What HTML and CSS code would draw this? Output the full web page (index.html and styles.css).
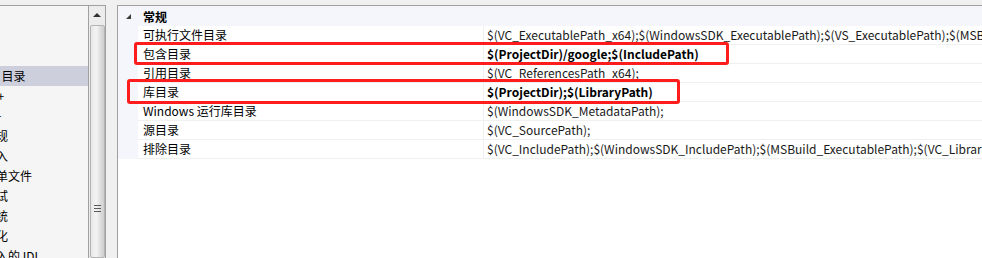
FILE: index.html
```html
<!DOCTYPE html>
<html lang="zh-CN">
<head>
  <meta charset="UTF-8">
  <title>VC++ 目录</title>
  <link rel="stylesheet" href="styles.css">
</head>
<body>
  <div class="window">
    <!-- 左侧属性树 -->
    <div class="tree-panel">
      <ul class="tree">
        <li class="node selected"><span class="label">VC++ 目录</span></li>
        <li class="node"><span class="label">C/C++</span></li>
        <li class="node"><span class="label tail">链接器 +</span></li>
        <li class="node child"><span class="label">常规</span></li>
        <li class="node child"><span class="label">输入</span></li>
        <li class="node child"><span class="label">清单文件</span></li>
        <li class="node child"><span class="label">调试</span></li>
        <li class="node child"><span class="label">系统</span></li>
        <li class="node child"><span class="label">优化</span></li>
        <li class="node child"><span class="label">嵌入的 IDL</span></li>
      </ul>
      <div class="scrollbar">
        <div class="arrow-up"></div>
        <div class="thumb">
          <div class="grip"></div>
        </div>
      </div>
    </div>

    <!-- 右侧属性表格 -->
    <div class="grid-panel">
      <div class="group-row">
        <span class="expander"></span>
        <span class="group-title">常规</span>
      </div>
      <div class="prop-row">
        <div class="name">可执行文件目录</div>
        <div class="value">$(VC_ExecutablePath_x64);$(WindowsSDK_ExecutablePath);$(VS_ExecutablePath);$(MSB</div>
      </div>
      <div class="prop-row">
        <div class="name">包含目录</div>
        <div class="value modified">$(ProjectDir)/google;$(IncludePath)</div>
      </div>
      <div class="prop-row">
        <div class="name">引用目录</div>
        <div class="value">$(VC_ReferencesPath_x64);</div>
      </div>
      <div class="prop-row">
        <div class="name">库目录</div>
        <div class="value modified">$(ProjectDir);$(LibraryPath)</div>
      </div>
      <div class="prop-row">
        <div class="name">Windows 运行库目录</div>
        <div class="value">$(WindowsSDK_MetadataPath);</div>
      </div>
      <div class="prop-row">
        <div class="name">源目录</div>
        <div class="value">$(VC_SourcePath);</div>
      </div>
      <div class="prop-row">
        <div class="name">排除目录</div>
        <div class="value">$(VC_IncludePath);$(WindowsSDK_IncludePath);$(MSBuild_ExecutablePath);$(VC_Librar</div>
      </div>

      <!-- 标注框 -->
      <div class="mark mark-include"></div>
      <div class="mark mark-lib"></div>
    </div>
  </div>
</body>
</html>
```

FILE: styles.css
```css
* {
  margin: 0;
  padding: 0;
  box-sizing: border-box;
}

body {
  width: 982px;
  height: 258px;
  overflow: hidden;
  background-color: #f0f0f0;
  font-family: "Noto Sans CJK SC", "Noto Sans", sans-serif;
  font-size: 12px;
  color: #000000;
}

.window {
  display: flex;
  padding-top: 5px;
  height: 258px;
  gap: 11px;
}

/* 左侧树 */
.tree-panel {
  display: flex;
  flex-shrink: 0;
  width: 106px;
  height: 253px;
  background-color: #f5f5f5;
  border-top: 1px solid #a0a0a0;
  border-right: 1px solid #a0a0a0;
  overflow: hidden;
}

.tree {
  list-style: none;
  width: 88px;
  padding-top: 60px;
  overflow: hidden;
}

.node {
  height: 20px;
  line-height: 20px;
  white-space: nowrap;
}

.node .label {
  display: inline-block;
  margin-left: -29px;
}

.node .tail {
  margin-left: -44px;
}

.node.child .label {
  margin-left: -16px;
}

.node.selected {
  background-color: #cdcfdd;
}

.scrollbar {
  width: 17px;
  border-left: 1px solid #a0a0a0;
  background-color: #ececec;
  display: flex;
  flex-direction: column;
  align-items: center;
}

.arrow-up {
  margin-top: 7px;
  width: 0;
  height: 0;
  border-left: 4px solid transparent;
  border-right: 4px solid transparent;
  border-bottom: 4px solid #303030;
}

.thumb {
  margin-top: 8px;
  width: 15px;
  flex: 1;
  border: 1px solid #b4b4b4;
  border-radius: 2px;
  background: linear-gradient(to right, #e6e6e6, #f4f4f4 40%, #dcdcdc 75%, #cfcfcf);
  display: flex;
  justify-content: center;
}

.grip {
  margin-top: 179px;
  width: 7px;
  height: 8px;
  background: repeating-linear-gradient(to bottom, #5a5a5a 0, #5a5a5a 1px, transparent 1px, transparent 3px);
}

/* 右侧属性表 */
.grid-panel {
  position: relative;
  flex: 1;
  min-width: 0;
  height: 253px;
  overflow: hidden;
  background-color: #ffffff;
  border-top: 1px solid #a0a0a0;
  border-left: 1px solid #a0a0a0;
}

.group-row {
  display: flex;
  align-items: center;
  height: 20px;
  background-color: #f4f6fb;
}

.expander {
  width: 0;
  height: 0;
  margin-left: 8px;
  margin-top: 1px;
  border-left: 5px solid transparent;
  border-bottom: 5px solid #3c3c3c;
}

.group-title {
  margin-left: 12px;
  font-weight: bold;
}

.prop-row {
  display: flex;
  height: 19px;
  line-height: 18px;
  border-left: 20px solid #f4f6fb;
  white-space: nowrap;
}

.prop-row .name {
  flex-shrink: 0;
  width: 345px;
  padding-left: 5px;
  border-bottom: 1px solid #f0f0f0;
}

.prop-row .value {
  flex: 1;
  min-width: 0;
  padding-left: 3px;
  border-left: 1px solid #f0f0f0;
  border-bottom: 1px solid #f0f0f0;
  overflow: hidden;
  color: #1a1a1a;
}

.prop-row .value.modified {
  font-weight: bold;
  color: #000000;
}

/* 红色标注框 */
.mark {
  position: absolute;
  border: 3px solid #ff1c1c;
  border-radius: 3px;
}

.mark-include {
  left: 16px;
  top: 36px;
  width: 595px;
  height: 23px;
}

.mark-lib {
  left: 9px;
  top: 73px;
  width: 553px;
  height: 25px;
}
```
